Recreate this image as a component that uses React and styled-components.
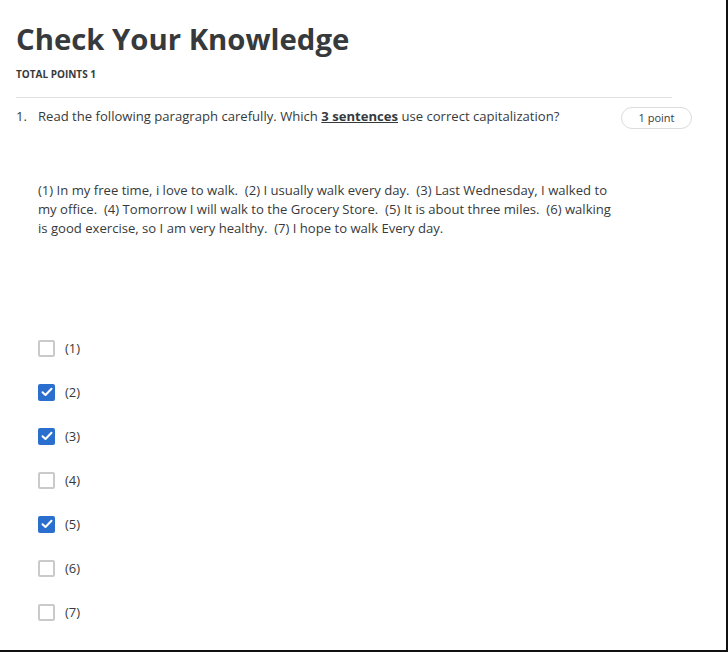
import React from 'react'
import styled, { createGlobalStyle } from 'styled-components'

const Global = createGlobalStyle`
  html, body { margin: 0; padding: 0; background: #fff; }
  body { font-family: "Open Sans", "Liberation Sans", sans-serif; color: #373a3c; }
`

const options = [
  { label: '(1)', checked: false },
  { label: '(2)', checked: true },
  { label: '(3)', checked: true },
  { label: '(4)', checked: false },
  { label: '(5)', checked: true },
  { label: '(6)', checked: false },
  { label: '(7)', checked: false },
]

const paragraph =
  '(1) In my free time, i love to walk.  (2) I usually walk every day.  (3) Last Wednesday, I walked to my office.  (4) Tomorrow I will walk to the Grocery Store.  (5) It is about three miles.  (6) walking is good exercise, so I am very healthy.  (7) I hope to walk Every day.'

function Check() {
  return (
    <svg width="12" height="10" viewBox="0 0 12 10">
      <path d="M1.5 5.2 L4.5 8 L10.5 1.8" fill="none" stroke="#fff" strokeWidth="2" strokeLinecap="round" strokeLinejoin="round" />
    </svg>
  )
}

export default function App() {
  return (
    <quiz.Frame>
      <Global />
      <quiz.Title>Check Your Knowledge</quiz.Title>
      <quiz.Total>Total points 1</quiz.Total>
      <quiz.Divider />
      <quiz.Question>
        <quiz.Number>1.</quiz.Number>
        <quiz.Prompt>
          Read the following paragraph carefully. Which <b>3 sentences</b> use correct capitalization?
        </quiz.Prompt>
        <quiz.Points>1 point</quiz.Points>
      </quiz.Question>
      <quiz.Paragraph>{paragraph}</quiz.Paragraph>
      <quiz.Options>
        {options.map((o) => (
          <quiz.Option key={o.label}>
            <quiz.Box checked={o.checked}>{o.checked && <Check />}</quiz.Box>
            <span>{o.label}</span>
          </quiz.Option>
        ))}
      </quiz.Options>
    </quiz.Frame>
  )
}

const quiz = {
  Frame: styled.main`
    box-sizing: border-box;
    width: 728px;
    height: 652px;
    border-right: 2px solid #111;
    border-bottom: 2px solid #111;
    padding: 20px 34px 0 16px;
    overflow: hidden;
  `,

  Title: styled.h1`
    margin: 0;
    font-size: 29.3px;
    line-height: 38px;
    font-weight: 700;
    color: #373a3c;
  `,

  Total: styled.div`
    margin-top: 10px;
    font-size: 10px;
    font-weight: 700;
    text-transform: uppercase;
    line-height: 12px;
  `,

  Divider: styled.hr`
    margin: 17px 0 0 0;
    border: 0;
    border-top: 1px solid #e1e1e1;
    width: 656px;
  `,

  Question: styled.div`
    display: flex;
    align-items: flex-start;
    margin-top: 8px;
    font-size: 13.1px;
    line-height: 20px;
  `,

  Number: styled.span`
    width: 22px;
    flex: none;
  `,

  Prompt: styled.div`
    flex: 1;
    b {
      font-weight: 700;
      text-decoration: underline;
    }
  `,

  Points: styled.span`
    flex: none;
    box-sizing: border-box;
    width: 71px;
    height: 22px;
    margin-top: 1px;
    border: 1px solid #dcdcdc;
    border-radius: 11px;
    font-size: 11px;
    line-height: 20px;
    text-align: center;
    margin-left: 20px;
  `,

  Paragraph: styled.p`
    margin: 52px 0 0 22px;
    width: 580px;
    font-size: 13.1px;
    line-height: 19px;
    white-space: pre-wrap;
  `,

  Options: styled.div`
    display: flex;
    flex-direction: column;
    gap: 26px;
    margin: 101px 0 0 22px;
  `,

  Option: styled.label`
    display: flex;
    align-items: center;
    gap: 10px;
    height: 18px;
    font-size: 13px;
  `,

  Box: styled.span`
    box-sizing: border-box;
    width: 17px;
    height: 17px;
    display: flex;
    align-items: center;
    justify-content: center;
    border-radius: 2px;
    border: 2px solid ${(p) => (p.checked ? '#2a6fce' : '#cacaca')};
    background: ${(p) => (p.checked ? '#2a6fce' : '#fff')};
  `,
}
